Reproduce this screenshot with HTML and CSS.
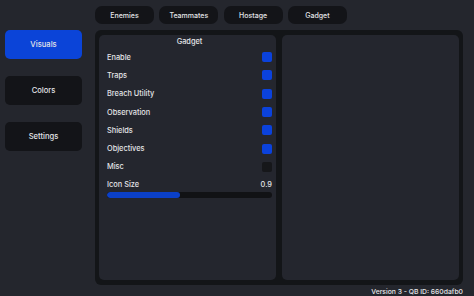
FILE: index.html
```html
<html lang="en">
	<head>
		<meta charset="UTF-8">
		<meta name="viewport" content="width=device-width, initial-scale=1.0">
		<title>Menu</title>
        <link rel="stylesheet" href="styles.css">
	</head>
	<body>
		<div class="app">
			<div class="sidebar">
				<button class="side-btn active">Visuals</button>
				<button class="side-btn">Colors</button>
				<button class="side-btn">Settings</button>
			</div>
			<div class="main">
				<div class="tabs">
					<button class="tab">Enemies</button>
					<button class="tab">Teammates</button>
					<button class="tab">Hostage</button>
					<button class="tab">Gadget</button>
				</div>
				<div class="panel">
					<div class="column">
						<div class="column-title">Gadget</div>
						<div class="row"><span>Enable</span><span class="check on"></span></div>
						<div class="row"><span>Traps</span><span class="check on"></span></div>
						<div class="row"><span>Breach Utility</span><span class="check on"></span></div>
						<div class="row"><span>Observation</span><span class="check on"></span></div>
						<div class="row"><span>Shields</span><span class="check on"></span></div>
						<div class="row"><span>Objectives</span><span class="check on"></span></div>
						<div class="row"><span>Misc</span><span class="check"></span></div>
						<div class="row slider-row"><span>Icon Size</span><span>0.9</span></div>
						<div class="slider"><div class="slider-fill" style="width: 44.5%"></div></div>
					</div>
					<div class="column"></div>
				</div>
				<div class="version">Version 3 - QB ID: 660dafb0</div>
			</div>
		</div>
	</body>
</html>
```

FILE: styles.css
```css
body {
    margin: 0;
    background-color: #24262d;
    color: #e4e5e8;
    font-family: Inter, "Noto Sans", sans-serif;
    font-size: 7.4px;
    font-weight: 500;
}
button {
    font-family: inherit;
    font-weight: 500;
    color: #e4e5e8;
    border: none;
    cursor: pointer;
}
.app {
    display: flex;
    gap: 13px;
    padding: 6px 0 0 5px;
    height: 290px;
}
.sidebar {
    display: flex;
    flex-direction: column;
    gap: 17px;
    padding-top: 24px;
    width: 77px;
}
.side-btn {
    background-color: #131418;
    border-radius: 5px;
    font-size: 7.6px;
    height: 29px;
}
.side-btn.active {
    background-color: #0b44d8;
}
.main {
    display: flex;
    flex-direction: column;
    width: 368px;
}
.tabs {
    display: flex;
    gap: 5.3px;
}
.tab {
    background-color: #131418;
    border-radius: 7px;
    font-size: 7px;
    height: 18px;
    width: 59px;
}
.panel {
    background-color: #131518;
    border-radius: 6px;
    display: flex;
    gap: 6px;
    height: 256px;
    margin-top: 6px;
    padding: 5px 4px;
    box-sizing: border-box;
}
.column {
    background-color: #24262e;
    border-radius: 5px;
    flex: 1;
    padding: 0 4px 0 8px;
}
.column-title {
    line-height: 12px;
    padding: 1px 0 0;
    text-align: center;
}
.row {
    align-items: center;
    display: flex;
    height: 18.3px;
    justify-content: space-between;
}
.check {
    background-color: #16171a;
    border-radius: 2px;
    height: 10px;
    width: 10px;
}
.check.on {
    background-color: #0b42dc;
}
.slider-row {
    height: 16px;
}
.slider {
    background-color: #111215;
    border-radius: 4px;
    height: 6px;
    overflow: hidden;
}
.slider-fill {
    background-color: #0b40c8;
    border-radius: 4px;
    height: 100%;
}
.version {
    font-size: 6.8px;
    margin-top: 2px;
    text-align: right;
}
```
